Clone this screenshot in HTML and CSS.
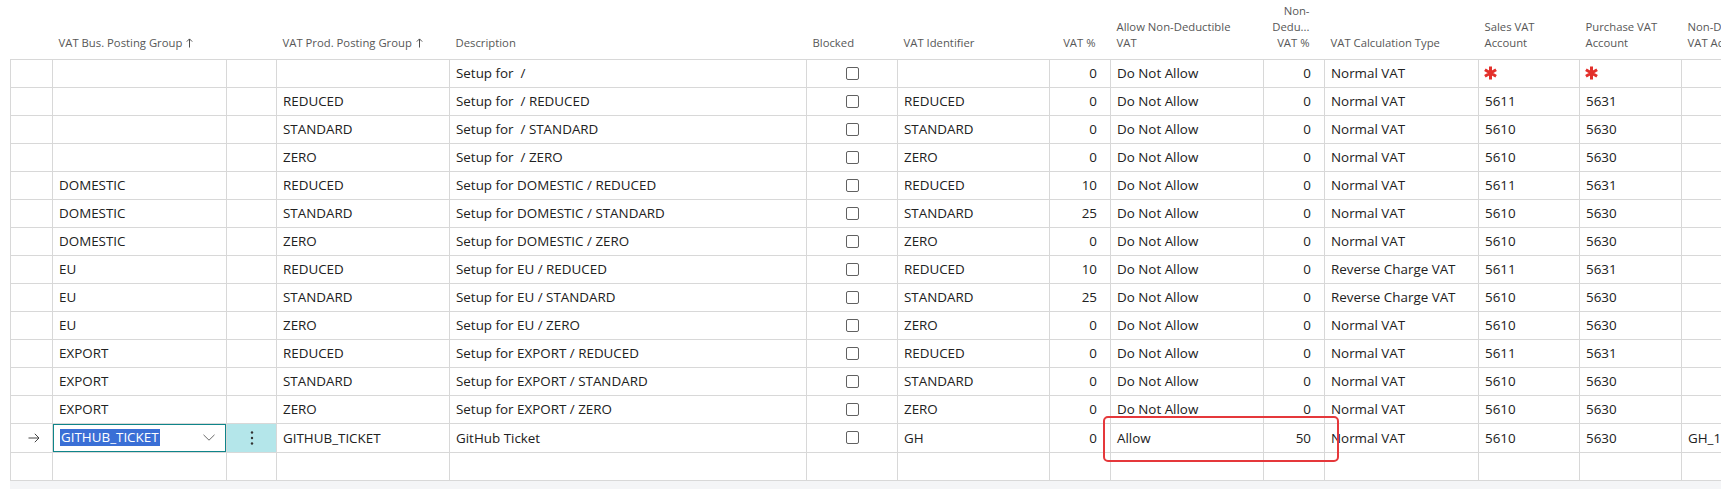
FILE: index.html
```html
<html>
	<head>
		<title>VAT Posting Setup</title>
		<meta charset="utf-8" />
		<link rel="stylesheet" href="styles.css">
	</head>
	<body>
		<div class="page">
			<div class="grid">
				<table class="list">
					<colgroup>
						<col class="w-sel"><col class="w-bus"><col class="w-dots"><col class="w-prod"><col class="w-desc">
						<col class="w-blk"><col class="w-id"><col class="w-pct"><col class="w-allow"><col class="w-pct">
						<col class="w-calc"><col class="w-acc"><col class="w-acc2"><col class="w-last">
					</colgroup>
					<thead>
						<tr>
							<th></th>
							<th>VAT Bus. Posting Group <svg class="sort" width="7" height="10" viewBox="0 0 7 10"><path d="M3.5 9.5V1M0.8 3.6L3.5 0.9L6.2 3.6" fill="none" stroke="#505050" stroke-width="1"/></svg></th>
							<th></th>
							<th>VAT Prod. Posting Group <svg class="sort" width="7" height="10" viewBox="0 0 7 10"><path d="M3.5 9.5V1M0.8 3.6L3.5 0.9L6.2 3.6" fill="none" stroke="#505050" stroke-width="1"/></svg></th>
							<th>Description</th>
							<th>Blocked</th>
							<th>VAT Identifier</th>
							<th class="num">VAT %</th>
							<th>Allow Non-Deductible<br>VAT</th>
							<th class="num">Non-<br>Dedu...<br>VAT %</th>
							<th>VAT Calculation Type</th>
							<th>Sales VAT<br>Account</th>
							<th>Purchase VAT<br>Account</th>
							<th>Non-Deductible<br>VAT Account</th>
						</tr>
					</thead>
					<tbody>
						<tr>
							<td></td><td></td><td></td><td></td><td>Setup for&nbsp; /</td>
							<td class="chk"><span class="box"></span></td><td></td><td class="num">0</td>
							<td>Do Not Allow</td><td class="num">0</td><td>Normal VAT</td>
							<td><svg class="req" width="15" height="14" viewBox="0 0 15 14"><path d="M7.5 0.5V13.5M1.9 3.75L13.1 10.25M1.9 10.25L13.1 3.75" stroke="#e3302b" stroke-width="3"/></svg></td>
							<td><svg class="req" width="15" height="14" viewBox="0 0 15 14"><path d="M7.5 0.5V13.5M1.9 3.75L13.1 10.25M1.9 10.25L13.1 3.75" stroke="#e3302b" stroke-width="3"/></svg></td>
							<td></td>
						</tr>
						<tr>
							<td></td><td></td><td></td><td>REDUCED</td><td>Setup for&nbsp; / REDUCED</td>
							<td class="chk"><span class="box"></span></td><td>REDUCED</td><td class="num">0</td>
							<td>Do Not Allow</td><td class="num">0</td><td>Normal VAT</td><td>5611</td><td>5631</td><td></td>
						</tr>
						<tr>
							<td></td><td></td><td></td><td>STANDARD</td><td>Setup for&nbsp; / STANDARD</td>
							<td class="chk"><span class="box"></span></td><td>STANDARD</td><td class="num">0</td>
							<td>Do Not Allow</td><td class="num">0</td><td>Normal VAT</td><td>5610</td><td>5630</td><td></td>
						</tr>
						<tr>
							<td></td><td></td><td></td><td>ZERO</td><td>Setup for&nbsp; / ZERO</td>
							<td class="chk"><span class="box"></span></td><td>ZERO</td><td class="num">0</td>
							<td>Do Not Allow</td><td class="num">0</td><td>Normal VAT</td><td>5610</td><td>5630</td><td></td>
						</tr>
						<tr>
							<td></td><td>DOMESTIC</td><td></td><td>REDUCED</td><td>Setup for DOMESTIC / REDUCED</td>
							<td class="chk"><span class="box"></span></td><td>REDUCED</td><td class="num">10</td>
							<td>Do Not Allow</td><td class="num">0</td><td>Normal VAT</td><td>5611</td><td>5631</td><td></td>
						</tr>
						<tr>
							<td></td><td>DOMESTIC</td><td></td><td>STANDARD</td><td>Setup for DOMESTIC / STANDARD</td>
							<td class="chk"><span class="box"></span></td><td>STANDARD</td><td class="num">25</td>
							<td>Do Not Allow</td><td class="num">0</td><td>Normal VAT</td><td>5610</td><td>5630</td><td></td>
						</tr>
						<tr>
							<td></td><td>DOMESTIC</td><td></td><td>ZERO</td><td>Setup for DOMESTIC / ZERO</td>
							<td class="chk"><span class="box"></span></td><td>ZERO</td><td class="num">0</td>
							<td>Do Not Allow</td><td class="num">0</td><td>Normal VAT</td><td>5610</td><td>5630</td><td></td>
						</tr>
						<tr>
							<td></td><td>EU</td><td></td><td>REDUCED</td><td>Setup for EU / REDUCED</td>
							<td class="chk"><span class="box"></span></td><td>REDUCED</td><td class="num">10</td>
							<td>Do Not Allow</td><td class="num">0</td><td>Reverse Charge VAT</td><td>5611</td><td>5631</td><td></td>
						</tr>
						<tr>
							<td></td><td>EU</td><td></td><td>STANDARD</td><td>Setup for EU / STANDARD</td>
							<td class="chk"><span class="box"></span></td><td>STANDARD</td><td class="num">25</td>
							<td>Do Not Allow</td><td class="num">0</td><td>Reverse Charge VAT</td><td>5610</td><td>5630</td><td></td>
						</tr>
						<tr>
							<td></td><td>EU</td><td></td><td>ZERO</td><td>Setup for EU / ZERO</td>
							<td class="chk"><span class="box"></span></td><td>ZERO</td><td class="num">0</td>
							<td>Do Not Allow</td><td class="num">0</td><td>Normal VAT</td><td>5610</td><td>5630</td><td></td>
						</tr>
						<tr>
							<td></td><td>EXPORT</td><td></td><td>REDUCED</td><td>Setup for EXPORT / REDUCED</td>
							<td class="chk"><span class="box"></span></td><td>REDUCED</td><td class="num">0</td>
							<td>Do Not Allow</td><td class="num">0</td><td>Normal VAT</td><td>5611</td><td>5631</td><td></td>
						</tr>
						<tr>
							<td></td><td>EXPORT</td><td></td><td>STANDARD</td><td>Setup for EXPORT / STANDARD</td>
							<td class="chk"><span class="box"></span></td><td>STANDARD</td><td class="num">0</td>
							<td>Do Not Allow</td><td class="num">0</td><td>Normal VAT</td><td>5610</td><td>5630</td><td></td>
						</tr>
						<tr>
							<td></td><td>EXPORT</td><td></td><td>ZERO</td><td>Setup for EXPORT / ZERO</td>
							<td class="chk"><span class="box"></span></td><td>ZERO</td><td class="num">0</td>
							<td>Do Not Allow</td><td class="num">0</td><td>Normal VAT</td><td>5610</td><td>5630</td><td></td>
						</tr>
						<tr class="current">
							<td class="arrow"><svg width="12" height="10" viewBox="0 0 12 10"><path d="M0.5 5H11M6.8 0.8L11 5L6.8 9.2" fill="none" stroke="#444" stroke-width="1"/></svg></td>
							<td class="edit">
								<div class="editbox">
									<span class="seltext">GITHUB_TICKET</span>
									<svg class="chev" width="12" height="7" viewBox="0 0 12 7"><path d="M0.5 0.8L6 6.2L11.5 0.8" fill="none" stroke="#6a6a6a" stroke-width="1"/></svg>
								</div>
							</td>
							<td class="dots"><svg width="4" height="14" viewBox="0 0 4 14"><circle cx="2" cy="1.5" r="1.2" fill="#333"/><circle cx="2" cy="7" r="1.2" fill="#333"/><circle cx="2" cy="12.5" r="1.2" fill="#333"/></svg></td>
							<td>GITHUB_TICKET</td><td>GitHub Ticket</td>
							<td class="chk"><span class="box"></span></td><td>GH</td><td class="num">0</td>
							<td>Allow</td><td class="num">50</td><td>Normal VAT</td><td>5610</td><td>5630</td><td>GH_1</td>
						</tr>
						<tr>
							<td></td><td></td><td></td><td></td><td></td><td></td><td></td><td></td><td></td><td></td><td></td><td></td><td></td><td></td>
						</tr>
					</tbody>
				</table>
			</div>
			<div class="footer"></div>
			<div class="mark"></div>
		</div>
	</body>
</html>
```

FILE: styles.css
```css
body {
	margin: 0;
	background: #fff;
	font-family: "Open Sans", "Noto Sans", sans-serif;
	color: #212121;
	overflow: hidden;
}
.page {
	position: relative;
	width: 1721px;
	height: 489px;
	overflow: hidden;
}
.grid {
	padding-left: 10px;
	overflow: hidden;
}
.list {
	table-layout: fixed;
	border-collapse: collapse;
	width: 1781px;
}
.w-sel { width: 42px; }
.w-bus { width: 174px; }
.w-dots { width: 50px; }
.w-prod { width: 173px; }
.w-desc { width: 357px; }
.w-blk { width: 91px; }
.w-id { width: 152px; }
.w-pct { width: 61px; }
.w-allow { width: 153px; }
.w-calc { width: 154px; }
.w-acc { width: 101px; }
.w-acc2 { width: 102px; }
.w-last { width: 110px; }
.list thead tr {
	height: 59px;
}
.list th {
	padding: 0 6px 8px 6px;
	vertical-align: bottom;
	text-align: left;
	font-weight: normal;
	font-size: 11.3px;
	line-height: 16px;
	color: #575757;
	white-space: nowrap;
	overflow: hidden;
	border-bottom: 1px solid #d8d8d8;
}
.list th.num {
	text-align: right;
	padding-right: 15px;
}
.sort {
	vertical-align: -1px;
	margin-left: 1px;
}
.list td {
	height: 27px;
	padding: 0 6px;
	font-size: 13.4px;
	white-space: nowrap;
	overflow: hidden;
	border: 1px solid #d8d8d8;
}
.list tbody tr {
	height: 28px;
}
.list td.num {
	text-align: right;
	padding-right: 13px;
}
.list td.chk {
	text-align: center;
	padding: 0;
}
.box {
	display: inline-block;
	width: 11px;
	height: 11px;
	border: 1px solid #616161;
	border-radius: 2px;
	vertical-align: middle;
}
.req {
	display: block;
	margin-left: -2px;
}
.arrow svg {
	display: block;
	margin: 0 0 0 11px;
}
.list td.edit {
	padding: 0;
}
.editbox {
	display: flex;
	align-items: center;
	justify-content: space-between;
	height: 26px;
	border: 1px solid #0f858a;
	padding: 0 10px 0 6px;
}
.seltext {
	background: #3a6fd6;
	color: #fff;
	line-height: 17px;
	padding: 0 1px;
}
.chev {
	display: block;
}
.list td.dots {
	background: #b4e6ea;
	padding: 0;
}
.dots svg {
	display: block;
	margin: 0 auto;
}
.footer {
	margin-left: 10px;
	height: 10px;
	background: #f4f5f7;
}
.mark {
	position: absolute;
	left: 1103px;
	top: 416px;
	width: 232px;
	height: 42px;
	border: 2px solid #e5383b;
	border-radius: 5px;
}
```
